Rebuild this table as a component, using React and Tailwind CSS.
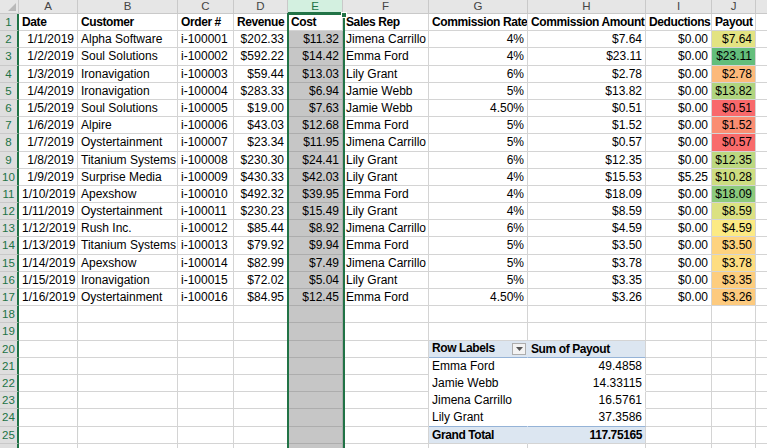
import React from 'react';

const widths = ['w-[59px]', 'w-[100px]', 'w-[56px]', 'w-[54px]', 'w-[55px]', 'w-[86px]', 'w-[99px]', 'w-[118px]', 'w-[66px]', 'w-[44px]'];
const aligns = ['text-right', 'text-left', 'text-left', 'text-right', 'text-right', 'text-left', 'text-right', 'text-right', 'text-right', 'text-right'];
const letters = ['A', 'B', 'C', 'D', 'E', 'F', 'G', 'H', 'I', 'J'];
const headers = ['Date', 'Customer', 'Order #', 'Revenue', 'Cost', 'Sales Rep', 'Commission Rate', 'Commission Amount', 'Deductions', 'Payout'];

const rows = [
  ['1/1/2019', 'Alpha Software', 'i-100001', '$202.33', '$11.32', 'Jimena Carrillo', '4%', '$7.64', '$0.00', '$7.64'],
  ['1/2/2019', 'Soul Solutions', 'i-100002', '$592.22', '$14.42', 'Emma Ford', '4%', '$23.11', '$0.00', '$23.11'],
  ['1/3/2019', 'Ironavigation', 'i-100003', '$59.44', '$13.03', 'Lily Grant', '6%', '$2.78', '$0.00', '$2.78'],
  ['1/4/2019', 'Ironavigation', 'i-100004', '$283.33', '$6.94', 'Jamie Webb', '5%', '$13.82', '$0.00', '$13.82'],
  ['1/5/2019', 'Soul Solutions', 'i-100005', '$19.00', '$7.63', 'Jamie Webb', '4.50%', '$0.51', '$0.00', '$0.51'],
  ['1/6/2019', 'Alpire', 'i-100006', '$43.03', '$12.68', 'Emma Ford', '5%', '$1.52', '$0.00', '$1.52'],
  ['1/7/2019', 'Oystertainment', 'i-100007', '$23.34', '$11.95', 'Jimena Carrillo', '5%', '$0.57', '$0.00', '$0.57'],
  ['1/8/2019', 'Titanium Systems', 'i-100008', '$230.30', '$24.41', 'Lily Grant', '6%', '$12.35', '$0.00', '$12.35'],
  ['1/9/2019', 'Surprise Media', 'i-100009', '$430.33', '$42.03', 'Lily Grant', '4%', '$15.53', '$5.25', '$10.28'],
  ['1/10/2019', 'Apexshow', 'i-100010', '$492.32', '$39.95', 'Emma Ford', '4%', '$18.09', '$0.00', '$18.09'],
  ['1/11/2019', 'Oystertainment', 'i-100011', '$230.23', '$15.49', 'Lily Grant', '4%', '$8.59', '$0.00', '$8.59'],
  ['1/12/2019', 'Rush Inc.', 'i-100012', '$85.44', '$8.92', 'Jimena Carrillo', '6%', '$4.59', '$0.00', '$4.59'],
  ['1/13/2019', 'Titanium Systems', 'i-100013', '$79.92', '$9.94', 'Emma Ford', '5%', '$3.50', '$0.00', '$3.50'],
  ['1/14/2019', 'Apexshow', 'i-100014', '$82.99', '$7.49', 'Jimena Carrillo', '5%', '$3.78', '$0.00', '$3.78'],
  ['1/15/2019', 'Ironavigation', 'i-100015', '$72.02', '$5.04', 'Lily Grant', '5%', '$3.35', '$0.00', '$3.35'],
  ['1/16/2019', 'Oystertainment', 'i-100016', '$84.95', '$12.45', 'Emma Ford', '4.50%', '$3.26', '$0.00', '$3.26'],
];

const pivot = [
  ['Emma Ford', '49.4858'],
  ['Jamie Webb', '14.33115'],
  ['Jimena Carrillo', '16.5761'],
  ['Lily Grant', '37.3586'],
];

// red - yellow - green colour scale, midpoint at the median
const payouts = rows.map((r) => parseFloat(r[9].slice(1)));
const sorted = [...payouts].sort((a, b) => a - b);
const lo = sorted[0];
const hi = sorted[sorted.length - 1];
const mid = (sorted[7] + sorted[8]) / 2;
const mix = (a, b, t) => a.map((v, i) => Math.round(v + (b[i] - v) * t));
const scaleColor = (v) => {
  const red = [248, 105, 107];
  const yellow = [255, 235, 132];
  const green = [99, 190, 123];
  const c = v <= mid ? mix(red, yellow, (v - lo) / (mid - lo)) : mix(yellow, green, (v - mid) / (hi - mid));
  return `rgb(${c[0]},${c[1]},${c[2]})`;
};

const cellBase = 'shrink-0 h-full border-r border-b px-[3px] whitespace-nowrap overflow-hidden leading-[17px]';

const RowHead = ({ n }) => (
  <div className="w-[19px] shrink-0 h-full bg-[#dedede] border-r-2 border-r-[#217346] border-b border-b-[#c9c9c9] text-[#217346] text-[11.5px] leading-[16px] text-center">
    {n}
  </div>
);

const Filler = () => <div className="flex-1 h-full border-b border-[#d4d4d4]" />;

const App = () => {
  return (
    <div className="relative w-[767px] h-[448px] overflow-hidden bg-white text-black text-[12px] font-['Liberation_Sans',Arial,sans-serif]">
      {/* column letters */}
      <div className="flex h-[14px]">
        <div className="w-[19px] shrink-0 h-full bg-[#e6e6e6] border-r border-b border-[#c9c9c9] flex items-end justify-end p-[2px]">
          <svg width="8" height="8" viewBox="0 0 8 8">
            <polygon points="8,0 8,8 0,8" fill="#b9b9b9" />
          </svg>
        </div>
        {letters.map((l, i) =>
          l === 'E' ? (
            <div key={l} className={`${widths[i]} shrink-0 h-full bg-[#d3f0e0] border-r border-r-[#c9c9c9] border-b-2 border-b-[#217346] text-center text-[#217346] text-[11.5px] leading-[13px]`}>
              {l}
            </div>
          ) : (
            <div key={l} className={`${widths[i]} shrink-0 h-full bg-[#e6e6e6] border-r border-b border-[#c9c9c9] text-center text-[#444] text-[11.5px] leading-[13px]`}>
              {l}
            </div>
          )
        )}
        <div className="flex-1 h-full bg-[#e6e6e6] border-b border-[#c9c9c9]" />
      </div>

      {/* header row */}
      <div className="flex h-[17.2px]">
        <RowHead n={1} />
        {headers.map((h, i) => (
          <div key={h} className={`${widths[i]} ${cellBase} border-[#d4d4d4] font-bold tracking-[-0.4px] text-left`}>
            {h}
          </div>
        ))}
        <Filler />
      </div>

      {/* data rows */}
      {rows.map((r, ri) => (
        <div key={ri} className="flex h-[17.2px]">
          <RowHead n={ri + 2} />
          {r.map((v, ci) => {
            if (ci === 4) {
              return (
                <div key={ci} className={`${widths[ci]} ${cellBase} bg-[#c6c6c6] border-[#adadad] text-right`}>
                  {v}
                </div>
              );
            }
            if (ci === 9) {
              return (
                <div key={ci} className={`${widths[ci]} ${cellBase} border-[#d4d4d4] text-right`} style={{ backgroundColor: scaleColor(payouts[ri]) }}>
                  {v}
                </div>
              );
            }
            return (
              <div key={ci} className={`${widths[ci]} ${cellBase} border-[#d4d4d4] ${aligns[ci]}`}>
                {v}
              </div>
            );
          })}
          <Filler />
        </div>
      ))}

      {/* rows 18-25 */}
      {[18, 19, 20, 21, 22, 23, 24, 25].map((n) => {
        const pivotIdx = n - 21;
        return (
          <div key={n} className="flex h-[17.2px]">
            <RowHead n={n} />
            {letters.map((l, ci) => {
              if (ci === 4) {
                return <div key={l} className={`${widths[ci]} ${cellBase} bg-[#c6c6c6] border-[#adadad]`} />;
              }
              if (n === 20 && ci === 6) {
                return (
                  <div key={l} className={`${widths[ci]} ${cellBase} bg-[#dce6f1] border-r-[#dce6f1] border-b-[#95b3d7] font-bold tracking-[-0.4px] flex items-center justify-between pr-[1px]`}>
                    <span>Row Labels</span>
                    <span className="w-[14px] h-[12px] bg-[#f3f3f3] border border-[#adadad] flex items-center justify-center">
                      <svg width="7" height="4" viewBox="0 0 7 4">
                        <polygon points="0,0 7,0 3.5,4" fill="#555" />
                      </svg>
                    </span>
                  </div>
                );
              }
              if (n === 20 && ci === 7) {
                return (
                  <div key={l} className={`${widths[ci]} ${cellBase} bg-[#dce6f1] border-r-[#d4d4d4] border-b-[#95b3d7] font-bold tracking-[-0.4px] text-left`}>
                    Sum of Payout
                  </div>
                );
              }
              if (pivotIdx >= 0 && pivotIdx < 4 && (ci === 6 || ci === 7)) {
                const last = pivotIdx === 3;
                return ci === 6 ? (
                  <div key={l} className={`${widths[ci]} ${cellBase} border-r-white ${last ? 'border-b-[#95b3d7]' : 'border-b-white'} text-left`}>
                    {pivot[pivotIdx][0]}
                  </div>
                ) : (
                  <div key={l} className={`${widths[ci]} ${cellBase} border-r-[#d4d4d4] ${last ? 'border-b-[#95b3d7]' : 'border-b-white'} text-right`}>
                    {pivot[pivotIdx][1]}
                  </div>
                );
              }
              if (n === 25 && ci === 6) {
                return (
                  <div key={l} className={`${widths[ci]} ${cellBase} bg-[#dce6f1] border-r-[#dce6f1] border-b-[#d4d4d4] font-bold tracking-[-0.4px] text-left`}>
                    Grand Total
                  </div>
                );
              }
              if (n === 25 && ci === 7) {
                return (
                  <div key={l} className={`${widths[ci]} ${cellBase} bg-[#dce6f1] border-r-[#d4d4d4] border-b-[#d4d4d4] font-bold tracking-[-0.4px] text-right`}>
                    117.75165
                  </div>
                );
              }
              return <div key={l} className={`${widths[ci]} ${cellBase} border-[#d4d4d4]`} />;
            })}
            <Filler />
          </div>
        );
      })}
      <div className="flex h-[17.2px]">
        <div className="w-[19px] shrink-0 h-full bg-[#dedede] border-r-2 border-r-[#217346]" />
        {letters.map((l, ci) =>
          ci === 4 ? (
            <div key={l} className={`${widths[ci]} shrink-0 h-full bg-[#c6c6c6] border-r border-[#adadad]`} />
          ) : (
            <div key={l} className={`${widths[ci]} shrink-0 h-full border-r border-[#d4d4d4]`} />
          )
        )}
      </div>

      {/* selected column outline */}
      <div className="absolute left-[287px] top-[13px] w-[58px] h-[440px] border-2 border-[#217346] pointer-events-none">
        <div className="absolute right-[-4px] top-[-3px] w-[6px] h-[6px] bg-[#217346] border border-white" />
      </div>
    </div>
  );
};

export default App;
